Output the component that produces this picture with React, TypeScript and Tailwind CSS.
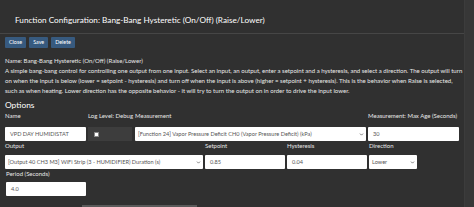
import { ChevronDown } from 'lucide-react';

function Label({ children, className = '' }: { children: React.ReactNode; className?: string }) {
  return <div className={`h-[10px] leading-[10px] text-[6px] text-[#e8e8e8] whitespace-nowrap ${className}`}>{children}</div>;
}

function TextInput({ value, w }: { value: string; w: string }) {
  return (
    <div className={`${w} h-[14px] bg-white rounded-[1px] flex items-center pl-[5px] text-[5.6px] text-[#555] whitespace-nowrap overflow-hidden`}>
      {value}
    </div>
  );
}

function Select({ value, w }: { value: string; w: string }) {
  return (
    <div className={`${w} h-[14px] bg-white rounded-[1px] flex items-center justify-between pl-[3px] pr-[2px] text-[5.6px] text-[#555] whitespace-nowrap overflow-hidden`}>
      <span>{value}</span>
      <ChevronDown size={5} strokeWidth={3.5} color="#555" />
    </div>
  );
}

export default function App() {
  return (
    <div className="w-[474px] h-[207px] bg-[#303030] overflow-hidden relative flex font-['Lato','Noto_Sans',sans-serif]">
      <div className="w-[465px] shrink-0 border-r border-[#3c3c3c]">
        {/* header */}
        <div className="h-[34px] border-b border-[#464646] pt-[15px] pl-[15px]">
          <div className="text-[8.2px] leading-[10px] text-white whitespace-nowrap">
            Function Configuration: Bang-Bang Hysteretic (On/Off) (Raise/Lower)
          </div>
        </div>

        <div className="px-[5px]">
          <div className="flex gap-[3px] mt-[3px]">
            <button className="h-[11px] px-[4px] bg-[#375a7f] text-white text-[5.4px] leading-[11px] rounded-[1px]">Close</button>
            <button className="h-[11px] px-[4px] bg-[#375a7f] text-white text-[5.4px] leading-[11px] rounded-[1px]">Save</button>
            <button className="h-[11px] px-[4px] bg-[#375a7f] text-white text-[5.4px] leading-[11px] rounded-[1px]">Delete</button>
          </div>

          <div className="mt-[8px] text-[6px] leading-[10px] text-[#e8e8e8] whitespace-nowrap">
            Name: Bang-Bang Hysteretic (On/Off) (Raise/Lower)
          </div>
          <div className="text-[6.05px] leading-[10px] text-[#e8e8e8] whitespace-nowrap">
            A simple bang-bang control for controlling one output from one input. Select an input, an output, enter a setpoint and a hysteresis, and select a direction. The output will turn
            <br />
            on when the input is below (lower = setpoint - hysteresis) and turn off when the input is above (higher = setpoint + hysteresis). This is the behavior when Raise is selected,
            <br />
            such as when heating. Lower direction has the opposite behavior - it will try to turn the output on in order to drive the input lower.
          </div>

          <div className="mt-[3px] text-[8.4px] leading-[12px] text-white">Options</div>

          {/* row 1 */}
          <div className="flex gap-[2px]">
            <div>
              <Label>Name</Label>
              <div className="mt-[6px]"><TextInput value="VPD DAY HUMIDISTAT" w="w-[81px]" /></div>
            </div>
            <div className="w-[44px]">
              <Label>Log Level: Debug</Label>
              <div className="mt-[6px] h-[14px] bg-[#3d3d3d] flex items-center pl-[6px]">
                <div className="w-[5px] h-[5px] bg-white border border-[#888]" />
              </div>
            </div>
            <div className="ml-[1px]">
              <Label>Measurement</Label>
              <div className="mt-[6px]"><Select value="[Function 24] Vapor Pressure Deficit CH0 (Vapor Pressure Deficit) (kPa)" w="w-[231px]" /></div>
            </div>
            <div>
              <Label>Measurement: Max Age (Seconds)</Label>
              <div className="mt-[6px]"><TextInput value="30" w="w-[91px]" /></div>
            </div>
          </div>

          {/* row 2 */}
          <div className="flex gap-[2px]">
            <div>
              <Label>Output</Label>
              <div className="mt-[4px]"><Select value="[Output 40 CH3 M3] WiFi Strip (3 - HUMIDIFIER) Duration (s)" w="w-[198px]" /></div>
            </div>
            <div>
              <Label>Setpoint</Label>
              <div className="mt-[4px]"><TextInput value="0.85" w="w-[80px]" /></div>
            </div>
            <div>
              <Label>Hysteresis</Label>
              <div className="mt-[4px]"><TextInput value="0.04" w="w-[80px]" /></div>
            </div>
            <div>
              <Label>Direction</Label>
              <div className="mt-[4px]"><Select value="Lower" w="w-[48px]" /></div>
            </div>
          </div>

          {/* row 3 */}
          <div className="pl-[1px]">
            <Label>Period (Seconds)</Label>
            <div className="mt-[3px]"><TextInput value="4.0" w="w-[80px]" /></div>
          </div>
        </div>
      </div>
      <div className="flex-1 bg-[#373737]" />
      {/* horizontal scrollbar thumb */}
      <div className="absolute left-[82px] bottom-0 w-[115px] h-[2px] bg-[#5a5a5a]" />
    </div>
  );
}
